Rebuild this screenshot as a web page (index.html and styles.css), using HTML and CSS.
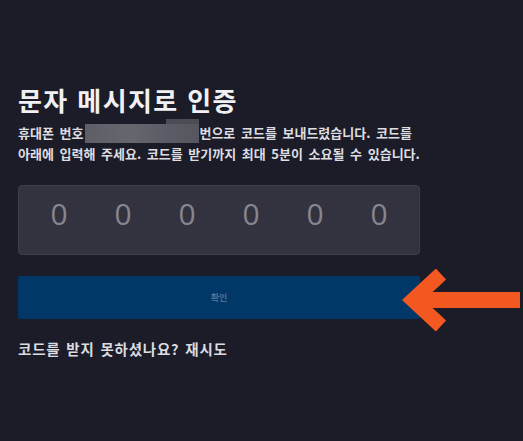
FILE: index.html
```html
<!DOCTYPE html>
<html lang="ko">
<head>
<meta charset="utf-8">
<link rel="stylesheet" href="styles.css">
</head>
<body>
<main class="page">
  <section class="verify">
    <h1 class="title">문자 메시지로 인증</h1>
    <p class="desc">휴대폰 번호<span class="masked"><span class="masked-dark"></span></span>번으로 코드를 보내드렸습니다. 코드를 아래에 입력해 주세요. 코드를 받기까지 최대 5분이 소요될 수 있습니다.</p>
    <div class="code-box">
      <span class="digit">0</span>
      <span class="digit">0</span>
      <span class="digit">0</span>
      <span class="digit">0</span>
      <span class="digit">0</span>
      <span class="digit">0</span>
    </div>
    <button class="confirm">확인</button>
    <p class="retry">코드를 받지 못하셨나요? 재시도</p>
  </section>
  <svg class="arrow" width="124" height="66" viewBox="0 0 124 66">
    <path d="M120 31 L22 31" stroke="#f2581f" stroke-width="16" fill="none"/>
    <path d="M41 5 L13 31 L41 57" stroke="#f2581f" stroke-width="15" fill="none" stroke-linejoin="miter" stroke-miterlimit="10"/>
  </svg>
</main>
</body>
</html>
```

FILE: styles.css
```css
html, body {
  margin: 0;
  padding: 0;
  background: #1b1c27;
}
body {
  width: 523px;
  height: 441px;
  overflow: hidden;
  font-family: "Noto Sans CJK KR", "Noto Sans", sans-serif;
}
.page {
  position: relative;
  height: 441px;
  padding: 84px 0 0 18px;
  box-sizing: border-box;
}
.verify {
  width: 402px;
  display: flex;
  flex-direction: column;
}
.title {
  margin: 0;
  font-size: 26px;
  line-height: 32px;
  font-weight: 700;
  color: #f1f1f3;
  letter-spacing: 1.4px;
}
.desc {
  margin: 6px 0 0;
  font-size: 13px;
  line-height: 21px;
  font-weight: 700;
  color: #dedee2;
  word-spacing: 2px;
  word-break: keep-all;
}
.masked {
  display: inline-block;
  position: relative;
  width: 114px;
  height: 19px;
  vertical-align: -5px;
  margin-left: 2px;
  background: linear-gradient(90deg, #5d5e67 0%, #66666f 40%, #5b5c65 70%, #56565f 100%);
}
.masked-dark {
  position: absolute;
  right: 0;
  top: -5px;
  width: 33px;
  height: 5px;
  background: #4c4c55;
}
.code-box {
  margin-top: 21px;
  height: 70px;
  box-sizing: border-box;
  padding: 10px 8px 0;
  display: grid;
  grid-template-columns: repeat(6, 1fr);
  align-items: start;
  background: #32333f;
  border: 1px solid #3d3e4a;
  border-radius: 4px;
}
.digit {
  text-align: center;
  font-family: "Open Sans", "Noto Sans", sans-serif;
  font-size: 30px;
  line-height: 36px;
  color: #86868d;
}
.confirm {
  margin-top: 21px;
  height: 43px;
  border: none;
  border-radius: 2px;
  background: #023868;
  color: #4d7197;
  font-family: "Noto Sans CJK KR", sans-serif;
  font-size: 9px;
  font-weight: 700;
  padding: 0;
}
.retry {
  margin: 20px 0 0;
  font-size: 14.5px;
  line-height: 20px;
  font-weight: 700;
  color: #dcdce0;
  letter-spacing: 0.8px;
  word-spacing: 1px;
}
.arrow {
  position: absolute;
  left: 400px;
  top: 269px;
}
```
